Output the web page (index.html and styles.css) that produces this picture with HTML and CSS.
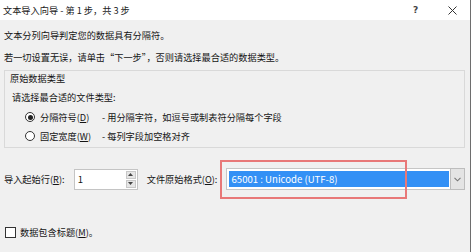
FILE: index.html
```html
<!DOCTYPE html>
<html lang="zh-CN">
<head>
<meta charset="utf-8">
<title>文本导入向导</title>
<link rel="stylesheet" href="styles.css">
</head>
<body>
<div class="window">
  <div class="titlebar">
    <span class="title">文本导入向导 - 第 1 步，共 3 步</span>
    <span class="help">?</span>
    <span class="close">
      <svg width="9" height="9" viewBox="0 0 9 9"><path d="M0.5 0.5 L8.5 8.5 M8.5 0.5 L0.5 8.5" stroke="#333" stroke-width="1" fill="none"/></svg>
    </span>
  </div>
  <div class="content">
    <div class="line first">文本分列向导判定您的数据具有分隔符。</div>
    <div class="line second">若一切设置无误，请单击“下一步”，否则请选择最合适的数据类型。</div>
    <div class="group">
      <div class="line legend">原始数据类型</div>
      <div class="line prompt">请选择最合适的文件类型:</div>
      <div class="radio-row r1">
        <span class="radio checked"><span class="dot"></span></span>
        <span class="rlabel">分隔符号(<u>D</u>)</span>
        <span class="rdesc">- 用分隔字符，如逗号或制表符分隔每个字段</span>
      </div>
      <div class="radio-row r2">
        <span class="radio"></span>
        <span class="rlabel">固定宽度(<u>W</u>)</span>
        <span class="rdesc">- 每列字段加空格对齐</span>
      </div>
    </div>
    <div class="import-row">
      <span class="lbl-start">导入起始行(<u>R</u>):</span>
      <div class="spin">
        <span class="spin-val">1</span>
        <span class="spin-btns">
          <span class="sb up"><svg width="5" height="3" viewBox="0 0 5 3"><path d="M0 3 L2.5 0 L5 3 Z" fill="#444"/></svg></span>
          <span class="sb down"><svg width="5" height="3" viewBox="0 0 5 3"><path d="M0 0 L2.5 3 L5 0 Z" fill="#444"/></svg></span>
        </span>
      </div>
      <span class="lbl-format">文件原始格式(<u>O</u>):</span>
      <div class="combo">
        <div class="combo-field"><span class="combo-sel">65001 : Unicode (UTF-8)</span></div>
        <div class="combo-btn"><svg width="7" height="5" viewBox="0 0 7 5"><path d="M0.5 0.8 L3.5 3.8 L6.5 0.8" stroke="#777" stroke-width="1.1" fill="none"/></svg></div>
      </div>
    </div>
    <div class="check-row">
      <span class="checkbox"></span>
      <span class="clabel">数据包含标题(<u>M</u>)。</span>
    </div>
    <div class="highlight"></div>
  </div>
</div>
</body>
</html>
```
FILE: styles.css
```css
html, body {
  margin: 0;
  padding: 0;
  background: #ffffff;
}
body {
  width: 474px;
  height: 252px;
  overflow: hidden;
  font-family: "Noto Sans CJK SC", "Noto Sans", sans-serif;
  font-size: 9.2px;
  color: #141414;
}
u { text-decoration: underline; text-underline-offset: 1px; }
.window {
  width: 470px;
  height: 252px;
  border-right: 1px solid #6e6e6e;
  display: flex;
  flex-direction: column;
}
.titlebar {
  height: 20px;
  background: #ffffff;
  display: flex;
  align-items: center;
  padding-left: 3px;
}
.title { flex: 1; line-height: 14px; color: #1a1a1a; }
.help {
  width: 8px;
  margin-right: 27px;
  font-family: "DejaVu Sans", sans-serif;
  font-size: 9px;
  font-weight: bold;
  color: #444;
  line-height: 14px;
}
.close {
  width: 9px;
  height: 9px;
  margin-right: 13px;
  display: flex;
}
.content {
  position: relative;
  flex: 1;
  background: #f0f0f0;
  padding: 8px 5px 0 4px;
  display: flex;
  flex-direction: column;
}
.line {
  height: 14px;
  line-height: 14px;
  white-space: nowrap;
}
.second { margin-top: 8px; }
.group {
  margin-top: 6px;
  border: 1px solid #d9d9d9;
  padding: 0 0 4px 5px;
  display: flex;
  flex-direction: column;
}
.prompt { margin-top: 5px; padding-left: 2px; }
.radio-row {
  height: 14px;
  line-height: 14px;
  display: flex;
  align-items: center;
  white-space: nowrap;
}
.r1 { margin-top: 6px; }
.r2 { margin-top: 5px; }
.radio {
  width: 8px;
  height: 8px;
  margin-left: 15px;
  border: 1px solid #333;
  border-radius: 50%;
  background: #fff;
  display: flex;
  align-items: center;
  justify-content: center;
}
.dot {
  width: 5px;
  height: 5px;
  border-radius: 50%;
  background: #222;
}
.rlabel { width: 62px; margin-left: 5px; }
.import-row {
  margin-top: 20px;
  height: 22px;
  display: flex;
  align-items: center;
  white-space: nowrap;
}
.lbl-start { width: 70px; }
.spin {
  width: 62px;
  height: 19px;
  border: 1px solid #c4c4c4;
  background: #fff;
  display: flex;
  align-items: center;
}
.spin-val { flex: 1; padding-left: 3px; font-size: 9.5px; }
.spin-btns {
  width: 10px;
  height: 17px;
  margin-right: 1px;
  display: flex;
  flex-direction: column;
  gap: 1px;
}
.sb {
  flex: 1;
  background: #e6e6e6;
  border: 1px solid #c8c8c8;
  display: flex;
  align-items: center;
  justify-content: center;
}
.lbl-format { width: 79px; margin-left: 9px; }
.combo {
  width: 240px;
  height: 22px;
  display: flex;
  align-items: stretch;
}
.combo-field {
  flex: 1;
  border: 1px solid #c6c6c6;
  border-right: none;
  background: #fff;
  padding: 2px 1px 2px 2px;
  display: flex;
}
.combo-sel {
  flex: 1;
  background: #3390f5;
  color: #fff;
  line-height: 16px;
  padding-left: 3px;
  font-size: 9.6px;
}
.combo-btn {
  width: 13px;
  border: 1px solid #bdbdbd;
  background: #e4e4e4;
  display: flex;
  align-items: center;
  justify-content: center;
}
.check-row {
  margin-top: 35px;
  height: 14px;
  line-height: 14px;
  display: flex;
  align-items: center;
  padding-left: 1px;
}
.checkbox {
  width: 9px;
  height: 9px;
  border: 1px solid #333;
  background: #fff;
}
.clabel { margin-left: 4px; }
.highlight {
  position: absolute;
  left: 220px;
  top: 140px;
  width: 183px;
  height: 35px;
  border: 2px solid #e87878;
}
```
